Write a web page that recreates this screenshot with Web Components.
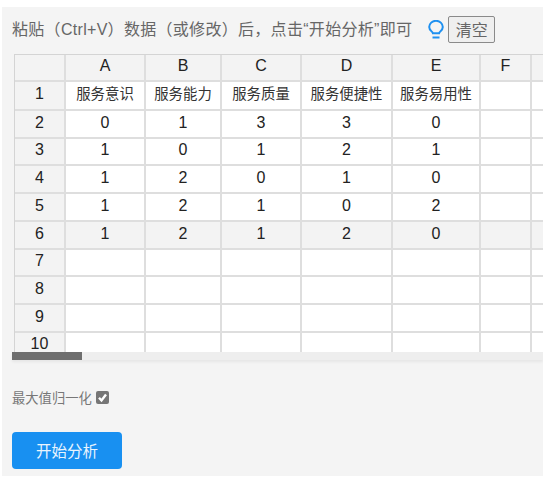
<!DOCTYPE html>
<html>
<head>
<meta charset="utf-8">
<style>
    html, body { margin: 0; padding: 0; background: #fff; overflow: hidden; }
</style>
</head>
<body>
<analysis-panel></analysis-panel>
<script>
const FONT = `"Liberation Sans", "Noto Sans CJK SC", sans-serif`;

class DataSheet extends HTMLElement {
    constructor() {
        super();
        this.attachShadow({ mode: "open" });
        this.rows = [
            ["A", "B", "C", "D", "E", "F", ""],
            ["服务意识", "服务能力", "服务质量", "服务便捷性", "服务易用性", "", ""],
            ["0", "1", "3", "3", "0", "", ""],
            ["1", "0", "1", "2", "1", "", ""],
            ["1", "2", "0", "1", "0", "", ""],
            ["1", "2", "1", "0", "2", "", ""],
            ["1", "2", "1", "2", "0", "", ""],
            ["", "", "", "", "", "", ""],
            ["", "", "", "", "", "", ""],
            ["", "", "", "", "", "", ""],
            ["", "", "", "", "", "", ""]
        ];
    }
    connectedCallback() {
        this.render();
    }
    render() {
        const cells = this.rows.map((row, r) => {
            const head = r === 0 ? "" : r;
            const rowClass = r === 0 ? "head" : r === 6 ? "shade" : r === 1 ? "title" : "";
            return `<div class="cell side">${head}</div>` +
                row.map(v => `<div class="cell ${rowClass}">${v}</div>`).join("");
        }).join("");
        this.shadowRoot.innerHTML = `
            <style>
                :host {
                    display: block;
                    font: 16px ${FONT};
                    color: #222;
                }
                .wrap {
                    height: 298px;
                    overflow: hidden;
                    margin-left: 2px;
                }
                .grid {
                    display: grid;
                    grid-template-columns: 51px 80px 76px 80px 91px 88px 51px 14px;
                    grid-template-rows: 27px 29px 28px 27px 28px 28px 28px 27px 28px 28px 26px;
                    border-top: 1px solid #d4d4d4;
                    border-left: 1px solid #d4d4d4;
                    background: #fff;
                }
                .cell {
                    box-sizing: border-box;
                    padding-bottom: 3px;
                    border-right: 2px solid #dedede;
                    border-bottom: 2px solid #dedede;
                    display: flex;
                    align-items: center;
                    justify-content: center;
                    white-space: nowrap;
                    overflow: hidden;
                }
                .title { font-size: 14.4px; color: #333; padding-bottom: 6px; }
                .side, .head, .shade { background: #f3f3f3; }
                .bar {
                    height: 8px;
                    background: #eeeeee;
                    box-shadow: 0 2px 3px rgba(0, 0, 0, 0.06);
                }
                .thumb { width: 70px; height: 8px; background: #6e6e6e; }
            </style>
            <div class="wrap"><div class="grid">${cells}</div></div>
            <div class="bar"><div class="thumb"></div></div>
        `;
    }
}
customElements.define("data-sheet", DataSheet);

class HintIcon extends HTMLElement {
    constructor() {
        super();
        this.attachShadow({ mode: "open" });
        this.shadowRoot.innerHTML = `
            <style>
                :host { display: inline-flex; width: 16px; height: 20px; }
            </style>
            <svg width="16" height="20" viewBox="0 0 16 20" fill="none" stroke="#1e90f0">
                <path d="M4.9 13.2C4.6 11.6 1.2 10.4 1.2 7A6.8 6.2 0 0 1 14.8 7C14.8 10.4 11.4 11.6 11.1 13.2Z" stroke-width="2"/>
                <path d="M4.5 17.5H11.5" stroke-width="2"/>
            </svg>
        `;
    }
}
customElements.define("hint-icon", HintIcon);

class PrimaryButton extends HTMLElement {
    constructor() {
        super();
        this.attachShadow({ mode: "open" });
        this.shadowRoot.innerHTML = `
            <style>
                :host {
                    display: flex;
                    align-items: center;
                    justify-content: center;
                    width: 110px;
                    height: 37px;
                    border-radius: 4px;
                    background: #1890f1;
                    color: #e9f4fe;
                    font: 15.5px ${FONT};
                    box-sizing: border-box;
                    padding-bottom: 2px;
                }
            </style>
            <slot></slot>
        `;
    }
}
customElements.define("primary-button", PrimaryButton);

class AnalysisPanel extends HTMLElement {
    constructor() {
        super();
        this.attachShadow({ mode: "open" });
    }
    connectedCallback() {
        this.shadowRoot.innerHTML = `
            <style>
                :host {
                    display: block;
                    box-sizing: border-box;
                    font: 16px ${FONT};
                    color: #666;
                    margin: 7px 0 0 2px;
                    padding-left: 10px;
                    background: #f4f4f4;
                    height: 469px;
                    overflow: hidden;
                }
                .tip {
                    display: flex;
                    align-items: center;
                    height: 45px;
                    margin-bottom: 2px;
                    white-space: nowrap;
                    letter-spacing: 0.3px;
                }
                .tip span { padding-bottom: 3px; }
                hint-icon { margin-left: 16px; }
                .clear {
                    box-sizing: border-box;
                    width: 47px;
                    height: 27px;
                    margin-left: 4px;
                    padding-bottom: 1px;
                    border: 1px solid #8a8a8a;
                    border-radius: 2px;
                    background: #efefef;
                    display: flex;
                    align-items: center;
                    justify-content: center;
                    letter-spacing: 0;
                }
                .norm {
                    display: flex;
                    align-items: center;
                    gap: 4px;
                    margin-top: 28px;
                    font-size: 13.3px;
                    color: #777;
                    height: 18px;
                }
                .check {
                    width: 13px;
                    height: 13px;
                    border-radius: 2px;
                    background: #767676;
                    display: flex;
                }
                .run { margin-top: 26px; }
            </style>
            <div class="tip">
                <span>粘贴（Ctrl+V）数据（或修改）后，点击“开始分析”即可</span>
                <hint-icon></hint-icon>
                <div class="clear">清空</div>
            </div>
            <data-sheet></data-sheet>
            <div class="norm">
                <span>最大值归一化</span>
                <span class="check">
                    <svg width="13" height="13" viewBox="0 0 13 13" fill="none" stroke="#fff" stroke-width="2.4">
                        <path d="M3 6.8L5.5 9.5L10 3.5"/>
                    </svg>
                </span>
            </div>
            <primary-button class="run">开始分析</primary-button>
        `;
    }
}
customElements.define("analysis-panel", AnalysisPanel);
</script>
</body>
</html>
